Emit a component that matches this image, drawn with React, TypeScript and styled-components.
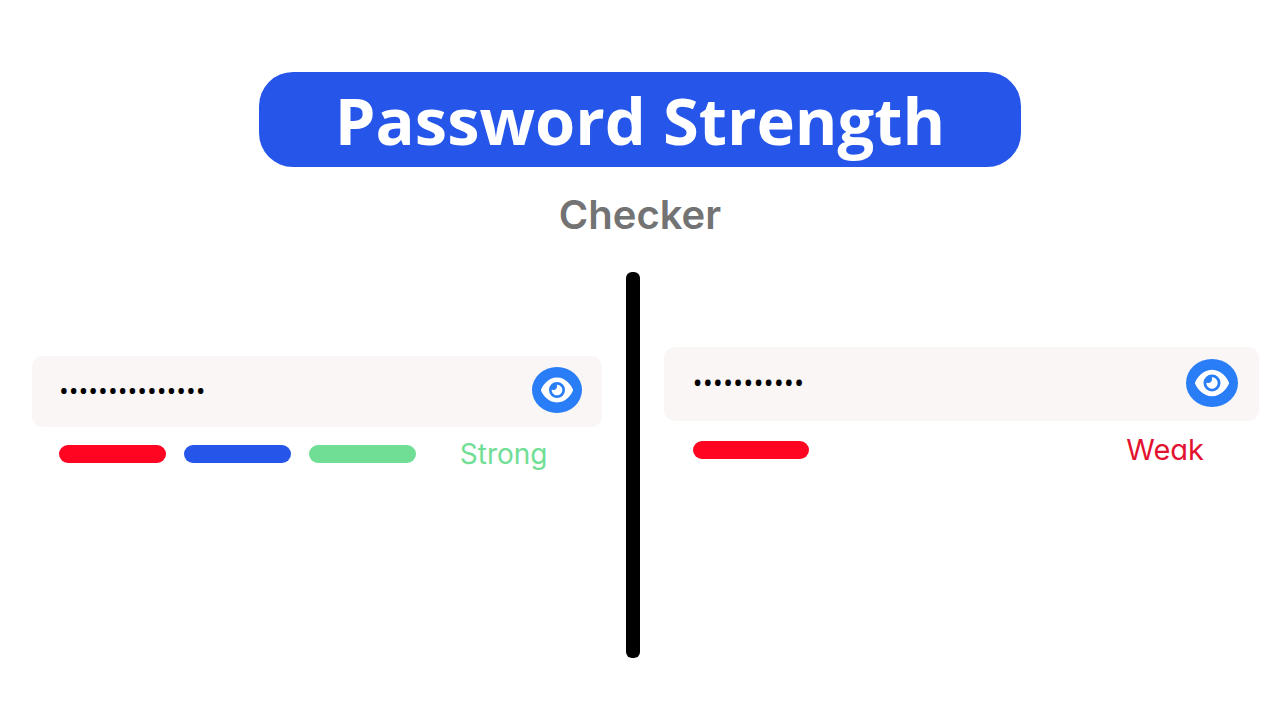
import React, { useState } from "react";
import styled, { createGlobalStyle } from "styled-components";
import { FaEye } from "react-icons/fa6";

const GlobalStyle = createGlobalStyle`
  *, *::before, *::after { box-sizing: border-box; }
  body { margin: 0; background: #ffffff; }
`;

const Page = styled.main`
  display: flex;
  flex-direction: column;
  align-items: center;
  min-height: 100vh;
  padding: 72px 0 62px;
  font-family: Inter, "Liberation Sans", sans-serif;
`;

const Title = styled.h1`
  margin: 0;
  width: 59.5%;
  min-width: min-content;
  padding: 1px 24px 0;
  border-radius: 34px;
  background: #2656e9;
  color: #ffffff;
  font: 700 65px/94px "Open Sans", sans-serif;
  text-align: center;
  white-space: nowrap;
`;

const Subtitle = styled.h2`
  margin: 24px 0 33px;
  color: #737373;
  font-size: 40px;
  font-weight: 600;
  line-height: 48px;
`;

const Comparison = styled.div`
  display: grid;
  grid-template-columns: 570fr 14px 594fr;
  column-gap: 24px;
  flex: 1;
  width: 100%;
  min-height: 386px;
  padding: 0 21px 0 32px;
`;

const Divider = styled.div`
  border-radius: 6px;
  background: #000000;
`;

const Panel = styled.section<{ $top: number }>`
  padding-top: ${(p) => p.$top}px;
`;

const Field = styled.div<{ $large?: boolean }>`
  display: flex;
  align-items: center;
  height: ${(p) => (p.$large ? 74 : 71)}px;
  padding: ${(p) => (p.$large ? "0 21px 2px 28px" : "0 20px 3px 27px")};
  border-radius: 11px;
  background: #f9f6f5;
`;

const PasswordInput = styled.input<{ $large?: boolean }>`
  flex: 1;
  min-width: 0;
  padding: 0;
  border: 0;
  outline: 0;
  background: transparent;
  color: #000000;
  font: 500 ${(p) => (p.$large ? 27 : 26)}px/36px "Open Sans", sans-serif;
`;

const ToggleButton = styled.button<{ $large?: boolean }>`
  display: grid;
  place-items: center;
  width: ${(p) => (p.$large ? 52 : 50)}px;
  height: ${(p) => (p.$large ? 48 : 46)}px;
  padding: 0;
  border: 0;
  border-radius: 50%;
  background: #297df6;
  color: #ffffff;
  font-size: ${(p) => (p.$large ? 34 : 32)}px;
  cursor: pointer;
`;

const Meter = styled.div<{ $large?: boolean }>`
  display: flex;
  align-items: center;
  justify-content: space-between;
  height: 36px;
  margin-top: ${(p) => (p.$large ? 11 : 9)}px;
  padding: 0 55px 0 ${(p) => (p.$large ? 29 : 27)}px;
`;

const Bars = styled.div<{ $large?: boolean }>`
  display: grid;
  grid-template-columns: repeat(3, 1fr);
  gap: 18px;
  width: ${(p) => (p.$large ? 75 : 73)}%;
`;

const Bar = styled.span<{ $color: string }>`
  height: 18px;
  border-radius: 9px;
  background: ${(p) => p.$color};
`;

const Verdict = styled.output<{ $color: string; $large?: boolean }>`
  color: ${(p) => p.$color};
  font-size: ${(p) => (p.$large ? 29 : 28)}px;
  line-height: 36px;
  font-feature-settings: "cv11";
`;

type CheckerProps = {
  name: string;
  initial: string;
  bars: string[];
  verdict: string;
  color: string;
  top: number;
  large?: boolean;
};

function Checker({ name, initial, bars, verdict, color, top, large }: CheckerProps) {
  const [value, setValue] = useState(initial);
  const [visible, setVisible] = useState(false);
  return (
    <Panel $top={top}>
      <Field $large={large}>
        <PasswordInput
          $large={large}
          id={name}
          aria-label="Password"
          type={visible ? "text" : "password"}
          value={value}
          onChange={(e) => setValue(e.target.value)}
        />
        <ToggleButton
          $large={large}
          type="button"
          aria-label="Show password"
          onClick={() => setVisible(!visible)}
        >
          <FaEye />
        </ToggleButton>
      </Field>
      <Meter $large={large}>
        <Bars $large={large}>
          {bars.map((bar) => (
            <Bar key={bar} $color={bar} />
          ))}
        </Bars>
        <Verdict htmlFor={name} $color={color} $large={large}>
          {verdict}
        </Verdict>
      </Meter>
    </Panel>
  );
}

export default function App() {
  return (
    <>
      <GlobalStyle />
      <Page>
        <Title>Password Strength</Title>
        <Subtitle>Checker</Subtitle>
        <Comparison>
          <Checker
            name="strong-password"
            initial="Tr4vel!Light#29"
            bars={["#ff0522", "#2656e9", "#71de95"]}
            verdict="Strong"
            color="#71de95"
            top={84}
          />
          <Divider />
          <Checker
            name="weak-password"
            initial="passwordabc"
            bars={["#ff0522"]}
            verdict="Weak"
            color="#e3122f"
            top={75}
            large
          />
        </Comparison>
      </Page>
    </>
  );
}
